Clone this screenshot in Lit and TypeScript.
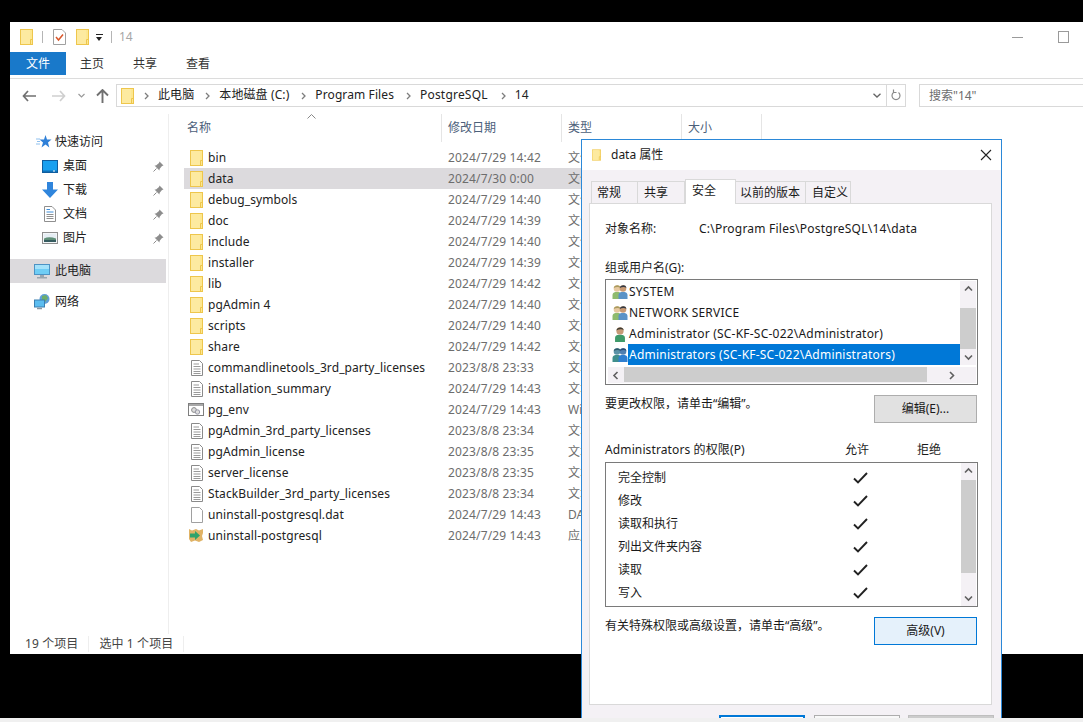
import { LitElement, html, css, svg } from "lit";
import { customElement } from "lit/decorators.js";

const folder = (w = 13, h = 16) => html`<svg class="ic" width=${w} height=${h} viewBox="0 0 13 16"><rect x=".5" y=".5" width="12" height="15" fill="#fde78f" stroke="#eec64c"/><rect x="1" y="1" width="9" height="14" fill="#fdeaa0"/><path d="M10.5 15V10.5H12.5" fill="none" stroke="#eec64c"/></svg>`;
const doc = html`<svg class="ic" width="14" height="16" viewBox="0 0 14 16"><path d="M1.5.5H9.5L12.5 3.5V15.5H1.5Z" fill="#fff" stroke="#8a8a8a"/><path d="M3.5 4H9M3.5 6.5H10.5M3.5 9H10.5M3.5 11.5H10.5M3.5 13.5H10.5" stroke="#9a9a9a"/></svg>`;
const dat = html`<svg class="ic" width="14" height="16" viewBox="0 0 14 16"><path d="M1.5.5H9.5L12.5 3.5V15.5H1.5Z" fill="#fff" stroke="#a0a0a0"/></svg>`;
const env = html`<svg class="ic env" width="16" height="14" viewBox="0 0 16 14"><rect x=".5" y=".5" width="15" height="12" fill="#fff" stroke="#7e7e7e"/><rect x="1" y="1" width="14" height="2" fill="#a8a8a8"/><circle cx="6" cy="7" r="2.4" fill="#ddd" stroke="#8a8a8a"/><circle cx="9.5" cy="9" r="2.2" fill="#ddd" stroke="#9a9aa8"/></svg>`;
const app = html`<svg class="ic env" width="16" height="15" viewBox="0 0 16 15"><path d="M1 1L4 2.5L8 1L11 2.5L15 1V5L14 8L15 12L11 14L7 12.5L3 14L1 11Z" fill="#e0b366"/><path d="M2 5.5H7V3L12 7.5L7 12V9.5H2Z" fill="#2fa36b"/></svg>`;
const chev = html`<svg class="chev" width="5" height="8" viewBox="0 0 5 8"><path d="M1 1L4 4L1 7" fill="none" stroke="#7d7d7d" stroke-width="1.3"/></svg>`;
const arrow = (d: string) => {
  const p: Record<string, string> = { u: "M1 5.5L4.5 2L8 5.5", d: "M1 2.5L4.5 6L8 2.5", l: "M5.5 1L2 4.5L5.5 8", r: "M3 1L6.5 4.5L3 8" };
  return html`<svg width="9" height="9" viewBox="0 0 9 9"><path d=${p[d]} fill="none" stroke="#606060" stroke-width="1.6"/></svg>`;
};
const check = html`<svg width="15" height="12" viewBox="0 0 15 12"><path d="M1 6.5L5 10.5L14 1" fill="none" stroke="#222" stroke-width="1.9"/></svg>`;

const person = (x: number, hair: string, face: string, body: string, scale = 1) => svg`<g transform="translate(${x} 0) scale(${scale})"><circle cx="5" cy="4.5" r="3.3" fill=${face}/><path d="M1.8 4C2 1 8 0 8.4 4C7 2.7 4 2.7 1.8 4Z" fill=${hair}/><path d="M.5 15V11C.5 8.5 3 8 5 8S9.5 8.5 9.5 11V15Z" fill=${body}/></g>`;
const users = html`<svg class="ic" width="16" height="16" viewBox="0 0 16 16">${person(0, "#a89a5e", "#e7c9a0", "#8fbb6e")}${person(6, "#333a44", "#c99a73", "#5b93c7")}</svg>`;
const adminIc = html`<svg class="ic" width="16" height="16" viewBox="0 0 16 16">${person(2.5, "#3c3c34", "#c79a78", "#3f9a6a", 1.1)}</svg>`;
const adminsIc = html`<svg class="ic" width="16" height="16" viewBox="0 0 16 16">${person(0, "#2f5a6a", "#5b93a7", "#3f8f8c")}${person(6, "#2a4a72", "#4f7fb0", "#2f7fd0")}</svg>`;

const star = html`<svg width="16" height="14" viewBox="0 0 16 14"><path d="M9.5 0L11 4.6H15.5L12 7.5L13.3 12.5L9.5 9.6L5.5 12.5L7 7.5L3.5 4.6H8Z" fill="#2f80d8"/><path d="M0 4H4M1 6.5H4M0 9H4" stroke="#8fc0ee"/></svg>`;
const desk = html`<svg width="16" height="13" viewBox="0 0 16 13"><rect x=".5" y=".5" width="15" height="12" fill="#18a0f0" stroke="#0f5d9e"/><rect x="1" y="10.5" width="14" height="1.5" fill="#0f70b8"/><rect x="11" y="10.5" width="2" height="1" fill="#fff"/></svg>`;
const down = html`<svg width="16" height="16" viewBox="0 0 16 16"><path d="M5 0H11V7.5H16L8 16L0 7.5H5Z" fill="#2f85dc"/></svg>`;
const docs = html`<svg width="12" height="16" viewBox="0 0 12 16"><path d="M.5.5H8L11.5 4V15.5H.5Z" fill="#fff" stroke="#8f8f8f"/><path d="M2.5 3.5H6M2.5 6H9.5" stroke="#3f8ed8"/><path d="M2.5 8.5H9.5M2.5 10.5H9.5M2.5 12.5H9.5" stroke="#8f8f8f"/></svg>`;
const pic = html`<svg width="16" height="12" viewBox="0 0 16 12"><rect x=".5" y=".5" width="15" height="11" fill="#f3f6f8" stroke="#8f8f8f"/><rect x="2" y="2" width="12" height="4" fill="#e6eef4"/><path d="M2 6.5Q7 4 14 6.5V10H2Z" fill="#5f8f78"/><path d="M2 8H14V10H2Z" fill="#365c60"/></svg>`;
const pc = html`<svg width="16" height="15" viewBox="0 0 16 15"><rect x=".5" y=".5" width="15" height="10" fill="#6fcdf5" stroke="#4d93c4"/><rect x="1" y="1" width="14" height="4" fill="#a4e2fa"/><path d="M6 11H10V13H6ZM3 13H13V14.5H3Z" fill="#9aa6b0"/></svg>`;
const net = html`<svg width="16" height="16" viewBox="0 0 16 16"><circle cx="10.5" cy="5" r="5" fill="#5f9fd8"/><path d="M8 2L12 1L14 4L11 8L8 6Z" fill="#6eae6a"/><rect x=".5" y="6" width="10" height="7" fill="#5cbdf0" stroke="#3b7fb0"/><path d="M3 14.5H8" stroke="#8a96a0" stroke-width="1.5"/></svg>`;

const files: [any, string, string, string][] = [
  [folder(), "bin", "2024/7/29 14:42", "文件夹"],
  [folder(), "data", "2024/7/30 0:00", "文件夹"],
  [folder(), "debug_symbols", "2024/7/29 14:40", "文件夹"],
  [folder(), "doc", "2024/7/29 14:39", "文件夹"],
  [folder(), "include", "2024/7/29 14:40", "文件夹"],
  [folder(), "installer", "2024/7/29 14:39", "文件夹"],
  [folder(), "lib", "2024/7/29 14:42", "文件夹"],
  [folder(), "pgAdmin 4", "2024/7/29 14:40", "文件夹"],
  [folder(), "scripts", "2024/7/29 14:40", "文件夹"],
  [folder(), "share", "2024/7/29 14:42", "文件夹"],
  [doc, "commandlinetools_3rd_party_licenses", "2023/8/8 23:33", "文本文档"],
  [doc, "installation_summary", "2024/7/29 14:43", "文本文档"],
  [env, "pg_env", "2024/7/29 14:43", "Windows 批处理文件"],
  [doc, "pgAdmin_3rd_party_licenses", "2023/8/8 23:34", "文本文档"],
  [doc, "pgAdmin_license", "2023/8/8 23:35", "文本文档"],
  [doc, "server_license", "2023/8/8 23:35", "文本文档"],
  [doc, "StackBuilder_3rd_party_licenses", "2023/8/8 23:34", "文本文档"],
  [dat, "uninstall-postgresql.dat", "2024/7/29 14:43", "DAT 文件"],
  [app, "uninstall-postgresql", "2024/7/29 14:43", "应用程序"],
];

@customElement("app-root")
export class AppRoot extends LitElement {
  static styles = css`
    :host { display: block; position: relative; width: 1083px; height: 722px; overflow: hidden; background: #000;
      font: 12px/16px "Noto Sans", "Noto Sans CJK SC", sans-serif; color: #1a1a1a; }
    svg { display: block; flex: none; }
    .win { position: absolute; left: 10px; top: 22px; width: 1073px; height: 632px; background: #fff; display: flex; flex-direction: column; overflow: hidden; }
    .title { height: 30px; display: flex; align-items: center; padding-left: 10px; flex: none; }
    .qsep { width: 1px; height: 12px; background: #b5b5b5; margin: 0 10px 0 9px; }
    .ttext { color: #a6a6a6; margin-left: 7px; flex: 1; }
    .minbtn { width: 11px; height: 1px; background: #9a9a9a; margin-right: 35px; }
    .maxbtn { width: 9px; height: 10px; border: 1px solid #9a9a9a; margin-right: 14px; margin-top: -1px; }
    .drop { margin: 0 8px 0 7px; width: 7px; }
    .drop i { display: block; height: 1px; background: #222; margin-bottom: 2px; }
    .drop b { display: block; width: 0; border: 3.5px solid transparent; border-top: 4px solid #222; border-bottom: 0; }
    .tabs { height: 23px; display: flex; flex: none; align-items: center; color: #333; }
    .file { width: 56px; height: 23px; background: #1979ca; color: #fff; text-align: center; line-height: 23px; margin-right: 14px; }
    .tabs span { margin-right: 29px; }
    .nav { height: 34px; flex: none; margin-top: 3px; border-top: 1px solid #dcdcdc; padding-top: 5px; display: flex; align-items: flex-start; }
    .navb { width: 106px; height: 23px; display: flex; align-items: center; flex: none; }
    .addr { width: 784px; height: 21px; border: 1px solid #d9d9d9; display: flex; align-items: center; padding-left: 4px; flex: none; color: #222; letter-spacing: .1px; }
    .addr > span { padding-bottom: 1px; }
    .addr .chev { margin: 0 9px 0 11px; }
    .addr .ic + .chev { margin-left: 10px; }
    .addr .m1 { margin-right: 1px; }
    .addr .m2 { margin-right: 2px; letter-spacing: .2px; }
    .addr .sp { flex: 1; }
    .vsep { width: 1px; height: 21px; background: #d9d9d9; margin: 0 4px 0 5px; }
    .search { margin-left: 13px; flex: 1; height: 21px; border: 1px solid #d9d9d9; border-right: 0; color: #6d6d6d; padding-left: 9px; line-height: 21px; }
    .body { flex: 1; display: flex; min-height: 0; margin-top: -4px; }
    .side { width: 158px; flex: none; border-right: 1px solid #eee; padding-top: 16px; margin-right: 15px; }
    .si { height: 24px; display: flex; align-items: center; width: 156px; color: #222; }
    .si .iw { width: 16px; display: flex; justify-content: center; flex: none; }
    .l1 { padding-left: 24px; box-sizing: border-box; }
    .l1 .iw { margin-right: 5px; }
    .l2 { padding-left: 32px; box-sizing: border-box; }
    .l2 .iw { margin-right: 5px; }
    .si .name { flex: 1; }
    .si svg.p { margin-right: 2px; }
    .pc { background: #dcdadd; margin-top: 9px; }
    .netw { margin-top: 7px; }
    .main { flex: 1; min-width: 0; }
    .hdr { display: grid; grid-template-columns: 258px 120px 120px 80px; height: 28px; color: #4c607a; margin-bottom: 5px; }
    .hdr div { border-right: 1px solid #e5e5e5; padding: 6px 0 0 6px; position: relative; }
    .hdr div:first-child { padding-left: 3px; }
    .sort { position: absolute; left: 123px; top: 0; }
    .row { display: grid; grid-template-columns: 258px 120px 1fr; width: 397px; overflow: hidden; height: 21px; align-items: center; letter-spacing: .09px; }
    .row.sel { background: #dcdadd; }
    .cell { display: flex; align-items: center; }
    .namec { padding-left: 6px; color: #222; }
    .namec .slot { width: 18px; flex: none; display: flex; }
    .env { margin-left: -2px; }
    .date { color: #6d6d6d; padding-left: 6px; letter-spacing: .15px; }
    .type { color: #6d6d6d; padding-left: 6px; white-space: nowrap; overflow: hidden; min-width: 0; }
    .status { height: 20px; flex: none; display: flex; align-items: center; padding-left: 15px; color: #444; letter-spacing: .1px; }
    .status i { width: 1px; height: 16px; background: #eee; margin: 0 10px; }
    .dlg { position: absolute; left: 581px; top: 139px; width: 421px; height: 600px; box-sizing: border-box; border: 1px solid #2b88d8; background: #f4f1f5; color: #1a1a1a; }
    .dt { height: 30px; background: #fff; display: flex; align-items: center; padding-left: 10px; }
    .dt span { margin-left: 10px; flex: 1; }
    .dt svg.x { margin-right: 9px; }
    .dtabs { display: flex; height: 22px; margin: 11px 0 0 9px; align-items: flex-end; }
    .dtab { height: 22px; box-sizing: border-box; border: 1px solid #d9d9d9; border-bottom: 0; border-left: 0; display: flex; align-items: center; padding-left: 6px; }
    .dtab.first { border-left: 1px solid #d9d9d9; padding-left: 5px; }
    .dtab.tight { padding-left: 4px; }
    .dtab.on { height: 25px; background: #fff; position: relative; top: 1px; border-left: 1px solid #d9d9d9; padding-bottom: 2px; z-index: 1; }
    .panel { width: 403px; height: 502px; box-sizing: border-box; margin-left: 7px; background: #fff; border: 1px solid #d9d9d9; padding: 16px 14px 0 15px; }
    .ln { height: 18px; line-height: 18px; display: flex; }
    .ln .k { width: 94px; }
    .path { letter-spacing: .22px; }
    .mt21 { margin-top: 21px; }
    .lbox { width: 373px; box-sizing: border-box; border: 1px solid #7a7a7a; }
    .users { height: 106px; margin-top: 2px; display: grid; grid-template-columns: 1fr 16px; grid-template-rows: 84px 16px; padding: 1px; row-gap: 2px; }
    .ulist { padding-left: 5px; min-width: 0; }
    .u { height: 21px; display: flex; align-items: center; letter-spacing: .22px; }
    .u span { flex: 1; padding-left: 1px; line-height: 21px; white-space: nowrap; }
    .u.sel span { background: #0078d7; color: #fff; }
    .vs { background: #f4f1f5; display: flex; flex-direction: column; align-items: stretch; }
    .vs .a { height: 16px; display: flex; align-items: center; justify-content: center; flex: none; }
    .vs .t { background: #cdcdcd; flex: none; }
    .hs { grid-column: 1 / 3; background: #f4f1f5; display: flex; margin-left: 1px; }
    .hs .a { width: 16px; display: flex; align-items: center; justify-content: center; flex: none; }
    .hs .t { background: #cdcdcd; width: 303px; height: 15px; }
    .hs .g { flex: 1; }
    .actrow { display: flex; justify-content: space-between; margin-top: 10px; width: 372px; }
    .actrow span { margin-top: 1px; }
    .btn { width: 103px; height: 28px; box-sizing: border-box; border: 1px solid #adadad; background: #e1e1e1; display: flex; align-items: center; justify-content: center; flex: none; }
    .btn.hot { background: #e5f1fb; border-color: #0078d7; }
    .phead { display: grid; grid-template-columns: 240px 72px auto; margin-top: 18px; height: 18px; line-height: 18px; }
    .adm { letter-spacing: .12px; }
    .perms { height: 145px; margin-top: 3px; display: flex; }
    .plist { flex: 1; padding-top: 3px; }
    .p { height: 23px; display: grid; grid-template-columns: 235px 14px; align-items: center; padding-left: 12px; }
    .perms .vs { width: 15px; margin-right: 1px; }
    .dbtns { display: flex; justify-content: flex-end; gap: 8px; padding-right: 7px; margin-top: 10px; }
    .db { width: 86px; height: 30px; box-sizing: border-box; border: 1px solid #adadad; background: #e1e1e1; }
    .db.def { border: 2px solid #0078d7; background: #fff; }
    .db.w { background: #f8f8f8; margin-left: 1px; }
    .db.off { border-color: #bfbfbf; background: #ccc; }
    .strip { position: absolute; left: 0; right: 0; bottom: 0; height: 4px; background: #f0f0f0; }
  `;

  render() {
    const vs = (thumbTop: number, thumbH: number) => html`<div class="vs">
      <div class="a">${arrow("u")}</div>
      <div style="height:${thumbTop}px;flex:none"></div>
      <div class="t" style="height:${thumbH}px"></div>
      <div style="flex:1"></div>
      <div class="a">${arrow("d")}</div></div>`;
    return html`
      <div class="win">
        <div class="title">
          ${folder()}<div class="qsep"></div>
          <svg width="13" height="16" viewBox="0 0 13 16"><path d="M.5.5H9L12.5 4V15.5H.5Z" fill="#fff" stroke="#a0a0a0"/><path d="M3 8L5.5 11L10 5.5" fill="none" stroke="#d9572b" stroke-width="1.5"/></svg>
          <span style="width:10px"></span>${folder()}
          <div class="drop"><i></i><b></b></div>
          <div class="qsep" style="margin:0"></div>
          <span class="ttext">14</span>
          <div class="minbtn"></div><div class="maxbtn"></div>
        </div>
        <div class="tabs"><div class="file">文件</div><span>主页</span><span>共享</span><span>查看</span></div>
        <div class="nav">
          <div class="navb">
            <svg width="14" height="12" viewBox="0 0 14 12" style="margin-left:12px"><path d="M6 1L1.5 6L6 11M2 6H14" fill="none" stroke="#707070" stroke-width="1.7"/></svg>
            <svg width="14" height="12" viewBox="0 0 14 12" style="margin-left:16px"><path d="M8 1L12.5 6L8 11M0 6H12" fill="none" stroke="#cfcfcf" stroke-width="1.7"/></svg>
            <svg width="7" height="5" viewBox="0 0 7 5" style="margin-left:12px"><path d="M.5 1L3.5 4L6.5 1" fill="none" stroke="#9a9a9a" stroke-width="1.2"/></svg>
            <svg width="13" height="14" viewBox="0 0 13 14" style="margin-left:11px"><path d="M1 6.5L6.5 1L12 6.5M6.5 2V14" fill="none" stroke="#707070" stroke-width="1.9"/></svg>
          </div>
          <div class="addr">
            ${folder()}${chev}<span>此电脑</span>${chev}<span class="m1">本地磁盘 (C:)</span>${chev}<span class="m1">Program Files</span>${chev}<span class="m2">PostgreSQL</span>${chev}<span>14</span>
            <span class="sp"></span>
            <svg width="8" height="5" viewBox="0 0 8 5"><path d="M.5 .7L4 4L7.5 .7" fill="none" stroke="#666" stroke-width="1.3"/></svg>
            <div class="vsep"></div>
            <svg width="10" height="13" viewBox="0 0 10 13" style="margin-right:4px"><path d="M7.5 3.5A4 4 0 1 1 2.5 3.5M2.5 3.5V.5M2.5 3.5H5.5" fill="none" stroke="#8a8a8a" stroke-width="1.2"/></svg>
          </div>
          <div class="search">搜索"14"</div>
        </div>
        <div class="body">
          <div class="side">
            <div class="si l1" style="padding-left:26px"><span class="iw" style="margin-right:3px">${star}</span><span class="name">快速访问</span></div>
            ${[["桌面", desk], ["下载", down], ["文档", docs], ["图片", pic]].map(([n, ic]) => html`<div class="si l2"><span class="iw">${ic}</span><span class="name">${n}</span><svg class="p" width="11" height="11" viewBox="0 0 11 11"><path d="M6.5.5L10.5 4.5L9 5L6.5 8V9.5L1.5 4.5H3L6 2Z" fill="#8d8d8d"/><path d="M3.5 7.5L.5 10.5" stroke="#8d8d8d"/></svg></div>`)}
            <div class="si l1 pc"><span class="iw">${pc}</span><span class="name">此电脑</span></div>
            <div class="si l1 netw"><span class="iw">${net}</span><span class="name">网络</span></div>
          </div>
          <div class="main">
            <div class="hdr">
              <div>名称<svg class="sort" width="9" height="5" viewBox="0 0 9 5"><path d="M.5 4.5L4.5 .5L8.5 4.5" fill="none" stroke="#888"/></svg></div>
              <div>修改日期</div><div>类型</div><div>大小</div>
            </div>
            ${files.map(([ic, n, d, t]) => html`<div class="row ${n === "data" ? "sel" : ""}">
              <div class="cell namec"><span class="slot">${ic}</span>${n}</div>
              <div class="date">${d}</div><div class="type">${t}</div></div>`)}
          </div>
        </div>
        <div class="status"><span>19 个项目</span><i></i><span>选中 1 个项目</span><i></i></div>
      </div>

      <div class="dlg">
        <div class="dt">
          ${folder(9, 12)}<span>data 属性</span>
          <svg class="x" width="12" height="12" viewBox="0 0 12 12"><path d="M1 1L11 11M11 1L1 11" stroke="#222" stroke-width="1.1"/></svg>
        </div>
        <div class="dtabs">
          <div class="dtab first" style="width:47px">常规</div>
          <div class="dtab" style="width:47px">共享</div>
          <div class="dtab on" style="width:51px">安全</div>
          <div class="dtab tight" style="width:70px">以前的版本</div>
          <div class="dtab" style="width:45px">自定义</div>
        </div>
        <div class="panel">
          <div class="ln"><span class="k">对象名称:</span><span class="path">C:\\Program Files\\PostgreSQL\\14\\data</span></div>
          <div class="ln mt21">组或用户名(G):</div>
          <div class="lbox users">
            <div class="ulist">
              <div class="u">${users}<span>SYSTEM</span></div>
              <div class="u">${users}<span>NETWORK SERVICE</span></div>
              <div class="u">${adminIc}<span>Administrator (SC-KF-SC-022\\Administrator)</span></div>
              <div class="u sel">${adminsIc}<span>Administrators (SC-KF-SC-022\\Administrators)</span></div>
            </div>
            ${vs(11, 41)}
            <div class="hs"><div class="a">${arrow("l")}</div><div class="t"></div><div class="g"></div><div class="a">${arrow("r")}</div><div style="width:17px"></div></div>
          </div>
          <div class="actrow"><span>要更改权限，请单击“编辑”。</span><div class="btn">编辑(E)...</div></div>
          <div class="phead"><span class="adm">Administrators 的权限(P)</span><span>允许</span><span>拒绝</span></div>
          <div class="lbox perms">
            <div class="plist">
              ${["完全控制", "修改", "读取和执行", "列出文件夹内容", "读取", "写入"].map((n) => html`<div class="p"><span>${n}</span>${check}</div>`)}
            </div>
            ${vs(1, 93)}
          </div>
          <div class="actrow"><span>有关特殊权限或高级设置，请单击“高级”。</span><div class="btn hot">高级(V)</div></div>
        </div>
        <div class="dbtns"><div class="db def"></div><div class="db w"></div><div class="db off"></div></div>
      </div>
      <div class="strip"></div>
    `;
  }
}
